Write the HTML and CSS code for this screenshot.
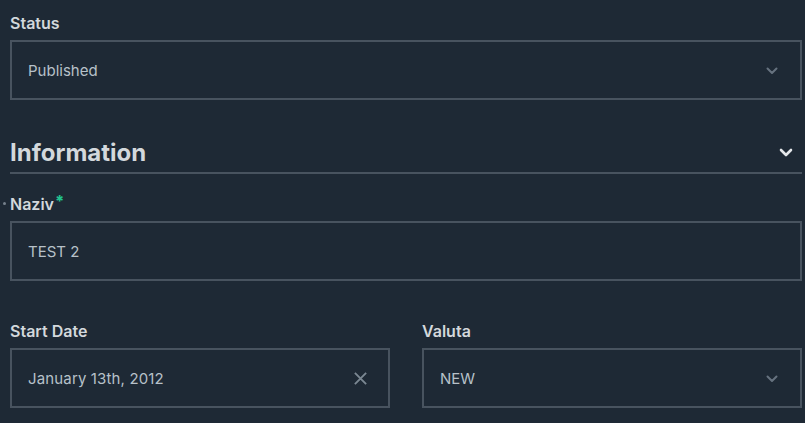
FILE: index.html
```html
<!DOCTYPE html>
<html lang="en">
<head>
<meta charset="utf-8">
<link rel="stylesheet" href="styles.css">
</head>
<body>
<div class="form">
  <div class="field">
    <label class="label">Status</label>
    <div class="box">
      <span class="value">Published</span>
      <svg class="chev" width="12" height="8" viewBox="0 0 12 8"><path d="M1.5 1.5 L6 6 L10.5 1.5" fill="none" stroke="currentColor" stroke-width="2" stroke-linecap="round" stroke-linejoin="round"/></svg>
    </div>
  </div>

  <div class="section">
    <h2 class="section-title">Information</h2>
    <svg class="section-chev" width="14" height="9" viewBox="0 0 14 9"><path d="M2 2 L7 7 L12 2" fill="none" stroke="currentColor" stroke-width="2.6" stroke-linecap="round" stroke-linejoin="round"/></svg>
  </div>

  <div class="field field-naziv">
    <label class="label"><span class="dot"></span>Naziv<span class="req">*</span></label>
    <div class="box">
      <span class="value">TEST 2</span>
    </div>
  </div>

  <div class="row">
    <div class="field">
      <label class="label">Start Date</label>
      <div class="box">
        <span class="value value-date">January 13th, 2012</span>
        <svg class="clear" width="15" height="15" viewBox="0 0 16 16"><path d="M2 2 L14 14 M14 2 L2 14" fill="none" stroke="currentColor" stroke-width="2"/></svg>
      </div>
    </div>
    <div class="field">
      <label class="label">Valuta</label>
      <div class="box">
        <span class="value">NEW</span>
        <svg class="chev" width="12" height="8" viewBox="0 0 12 8"><path d="M1.5 1.5 L6 6 L10.5 1.5" fill="none" stroke="currentColor" stroke-width="2" stroke-linecap="round" stroke-linejoin="round"/></svg>
      </div>
    </div>
  </div>
</div>
</body>
</html>
```
FILE: styles.css
```css
html, body {
  margin: 0;
  padding: 0;
  background: #1e2935;
}
body {
  font-family: Inter, "Noto Sans", "Liberation Sans", sans-serif;
  color: #d3d8dc;
  overflow: hidden;
  height: 423px;
}
.form {
  padding: 13px 3px 0 10px;
  display: flex;
  flex-direction: column;
}
.field {
  display: flex;
  flex-direction: column;
}
.label {
  position: relative;
  font-size: 16px;
  font-weight: 600;
  line-height: 20px;
  height: 20px;
  margin-bottom: 7px;
  color: #d3d8dc;
}
.dot {
  position: absolute;
  left: -7px;
  top: 8px;
  width: 3px;
  height: 3px;
  border-radius: 50%;
  background: #76818c;
}
.req {
  position: relative;
  top: -3px;
  color: #22c38e;
  font-size: 16px;
  font-weight: 800;
  margin-left: 1px;
}
.box {
  box-sizing: border-box;
  height: 60px;
  border: 2px solid #48535f;
  display: flex;
  align-items: center;
  justify-content: space-between;
  padding: 2px 22px 0 16px;
}
.value {
  font-size: 15px;
  line-height: 20px;
  color: #b7c1c9;
}
.value-date {
  letter-spacing: 0.15px;
}
.chev {
  color: #66727f;
  margin-top: -1px;
}
.clear {
  color: #7b8792;
  margin-right: -2px;
  margin-top: -2px;
}
.section {
  margin-top: 39px;
  padding-bottom: 5px;
  border-bottom: 2px solid #48535f;
  display: flex;
  align-items: center;
  justify-content: space-between;
}
.section-title {
  margin: 0;
  font-size: 24px;
  font-weight: 700;
  line-height: 28px;
  color: #d3d8dc;
}
.section-chev {
  color: #e4e7ea;
  margin-right: 9px;
  margin-top: -2px;
}
.field-naziv {
  margin-top: 20px;
}
.row {
  margin-top: 40px;
  display: grid;
  grid-template-columns: 1fr 1fr;
  gap: 32px;
}
```
